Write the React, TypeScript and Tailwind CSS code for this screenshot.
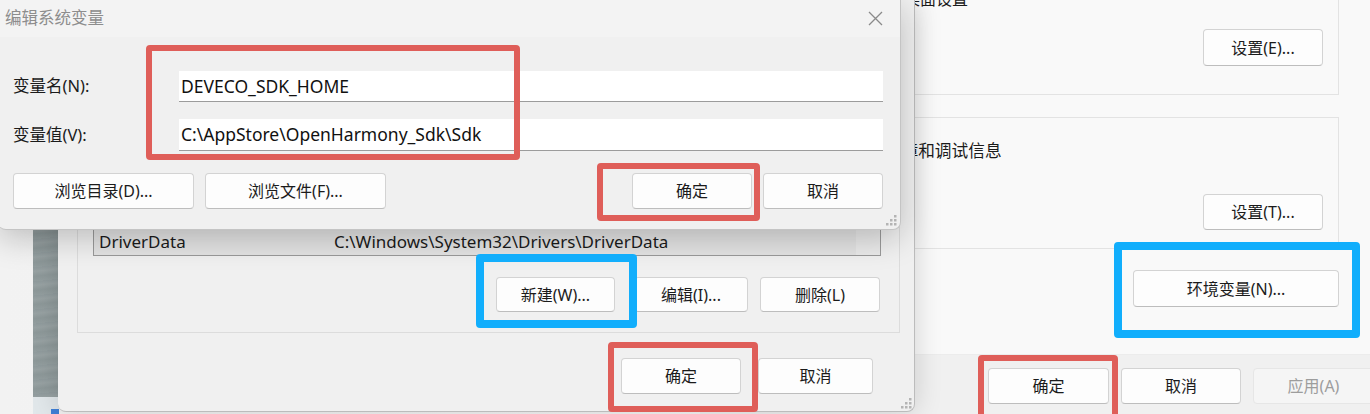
import React from "react";

const font = { fontFamily: '"Noto Sans", "Noto Sans CJK SC", sans-serif' };

// Win11-style push button
const Btn = ({
  children,
  className = "",
  disabled = false,
}: {
  children: React.ReactNode;
  className?: string;
  disabled?: boolean;
}) => (
  <div
    className={`flex shrink-0 items-center justify-center rounded-[4px] border text-[16px] ${
      disabled
        ? "border-[#e6e6e6] bg-[#f5f5f5] text-[#9d9d9d]"
        : "border-[#d3d3d3] border-b-[#bdbdbd] bg-[#fdfdfd] text-[#1b1b1b]"
    } ${className}`}
  >
    {children}
  </div>
);

const Grip = ({ className = "" }: { className?: string }) => (
  <svg width="11" height="11" viewBox="0 0 11 11" className={className}>
    {[
      [8, 0],
      [8, 4],
      [4, 4],
      [8, 8],
      [4, 8],
      [0, 8],
    ].map(([x, y], i) => (
      <rect key={i} x={x} y={y} width="2.5" height="2.5" fill="#b4b4b4" />
    ))}
  </svg>
);

// annotation frame drawn over the screenshot
const Mark = ({ className }: { className: string }) => (
  <div className={`pointer-events-none absolute rounded-[4px] ${className}`} />
);

const SystemProperties = () => (
  <div className="absolute left-[700px] top-0 flex h-[414px] w-[680px] flex-col bg-[#f9f9f9]">
    <div className="flex flex-1 flex-col pl-[20px] pr-[41px]">
      {/* 用户配置文件 */}
      <div className="mt-[-30px] flex h-[125px] flex-col border border-[#e3e3e3]">
        <div className="pl-[55px] pt-[17px] text-[16px] leading-[22px] text-[#1b1b1b]">
          与登录帐户相关的桌面设置
        </div>
        <div className="mt-[19px] flex justify-end pr-[15px]">
          <Btn className="h-[37px] w-[120px]">设置(E)...</Btn>
        </div>
      </div>
      {/* 启动和故障恢复 */}
      <div className="mt-[22px] flex h-[132px] flex-col border border-[#e3e3e3]">
        <div className="pl-[47px] pt-[22px] text-[16.7px] leading-[22px] text-[#1b1b1b]">
          系统启动、系统故障和调试信息
        </div>
        <div className="mt-[32px] flex justify-end pr-[15px]">
          <Btn className="h-[36px] w-[120px]">设置(T)...</Btn>
        </div>
      </div>
      <div className="mt-[21px] flex justify-end">
        <Btn className="h-[37px] w-[206px]">环境变量(N)...</Btn>
      </div>
    </div>
    <div className="flex h-[60px] gap-[12px] border-t border-[#ececec] bg-[#f0f0f0] pl-[288px] pt-[13px]">
      <Btn className="h-[36px] w-[121px]">确定</Btn>
      <Btn className="h-[36px] w-[120px]">取消</Btn>
      <Btn className="h-[36px] w-[121px]" disabled>
        应用(A)
      </Btn>
    </div>
  </div>
);

const EnvironmentVariables = () => (
  <div className="absolute left-[58px] top-0 flex h-[412px] w-[857px] flex-col rounded-b-[8px] border-b border-r border-[#bcbcbc] bg-[#f0f0f0] pl-[19px] pr-[14px] shadow-[0_0_28px_rgba(0,0,0,0.16)]">
    {/* 系统变量 */}
    <div className="flex flex-1 flex-col border-x border-b border-[#dcdcdc] pb-[20px]">
      <div className="ml-[15px] mr-[18px] flex flex-1 flex-col justify-end border-x border-b border-[#9a9a9a] bg-[#ececec]">
        <div className="flex h-[26px] items-center text-[17px] text-[#1b1b1b]">
          <div className="h-full flex-1 bg-[#e3e3e3] pl-[5px] leading-[26px]">
            <span className="inline-block w-[235px]">DriverData</span>
            <span>C:\Windows\System32\Drivers\DriverData</span>
          </div>
          <div className="h-full w-[24px] bg-[#eaeaea]" />
        </div>
      </div>
      <div className="mt-[21px] flex justify-end gap-[12px] pr-[19px]">
        <Btn className="mr-[7px] h-[35px] w-[119px] bg-[#f4f4f4]">新建(W)...</Btn>
        <Btn className="h-[35px] w-[114px]">编辑(I)...</Btn>
        <Btn className="h-[35px] w-[120px]">删除(L)</Btn>
      </div>
    </div>
    <div className="mb-[17px] mt-[25px] flex justify-end gap-[17px] pr-[27px]">
      <Btn className="h-[36px] w-[120px]">确定</Btn>
      <Btn className="h-[36px] w-[115px]">取消</Btn>
    </div>
    <Grip className="absolute bottom-[2px] right-[2px]" />
  </div>
);

const EditVariableDialog = () => (
  <div className="absolute left-[-2px] top-0 flex h-[230px] w-[903px] flex-col rounded-b-[8px] border-b border-r border-[#c4c4c4] bg-[#f0f0f0] shadow-[0_8px_32px_rgba(0,0,0,0.22)]">
    <div className="flex h-[37px] items-center justify-between bg-[#f3f3f3] pl-[7px] pr-[17px]">
      <span className="text-[16.5px] text-[#8d8d8d]">编辑系统变量</span>
      <svg width="15" height="15" viewBox="0 0 15 15">
        <path d="M1 1 L14 14 M14 1 L1 14" stroke="#8a8a8a" strokeWidth="1.3" />
      </svg>
    </div>
    <div className="flex flex-1 flex-col pl-[15px] pr-[17px] pt-[34px]">
      <div className="flex h-[31px] items-center">
        <span className="w-[166px] text-[16.5px] text-[#1b1b1b]">变量名(N):</span>
        <div className="flex h-full flex-1 items-center border-b border-[#9c9c9c] bg-white pl-[2px] text-[17.5px] text-[#111]">
          DEVECO_SDK_HOME
        </div>
      </div>
      <div className="mt-[17px] flex h-[32px] items-center">
        <span className="w-[166px] text-[16.5px] text-[#1b1b1b]">变量值(V):</span>
        <div className="flex h-full flex-1 items-center border-b border-[#9c9c9c] bg-white pl-[2px] text-[17.5px] text-[#111]">
          C:\AppStore\OpenHarmony_Sdk\Sdk
        </div>
      </div>
      <div className="mt-[22px] flex h-[36px] items-center">
        <Btn className="h-[36px] w-[181px]">浏览目录(D)...</Btn>
        <Btn className="ml-[11px] h-[36px] w-[181px]">浏览文件(F)...</Btn>
        <div className="flex-1" />
        <Btn className="h-[36px] w-[120px]">确定</Btn>
        <Btn className="ml-[11px] h-[36px] w-[120px]">取消</Btn>
      </div>
    </div>
    <Grip className="absolute bottom-[3px] right-[3px]" />
  </div>
);

export default function App() {
  return (
    <div
      className="relative h-[414px] w-[1370px] overflow-hidden bg-gradient-to-r from-[#f2f2f2] to-[#fbfbfb]"
      style={font}
    >
      {/* desktop wallpaper peeking out */}
      <div className="absolute left-[33px] top-0 flex h-[414px] w-[26px] flex-col">
        <div className="flex-1 bg-[repeating-linear-gradient(174deg,#8f9a9c_0px,#98a2a3_4px,#8d9899_9px,#939e9f_14px)]" />
        <div className="relative h-[17px] bg-[#e1e7ea]">
          <div className="absolute bottom-0 right-0 h-[5px] w-[8px] bg-[#3f7fd6]" />
        </div>
      </div>

      <SystemProperties />
      <EnvironmentVariables />
      <EditVariableDialog />

      {/* annotations */}
      <Mark className="left-[146px] top-[45px] h-[115px] w-[374px] border-[6px] border-[#df5e59]" />
      <Mark className="left-[597px] top-[163px] h-[58px] w-[163px] border-[6px] border-[#df5e59]" />
      <Mark className="left-[476px] top-[254px] h-[74px] w-[161px] border-[8px] border-[#11aefc]" />
      <Mark className="left-[608px] top-[342px] h-[70px] w-[150px] border-[6px] border-[#df5e59]" />
      <Mark className="left-[1114px] top-[242px] h-[96px] w-[246px] border-[8px] border-[#11aefc]" />
      <Mark className="left-[978px] top-[355px] h-[66px] w-[140px] border-[6px] border-[#df5e59]" />
    </div>
  );
}
